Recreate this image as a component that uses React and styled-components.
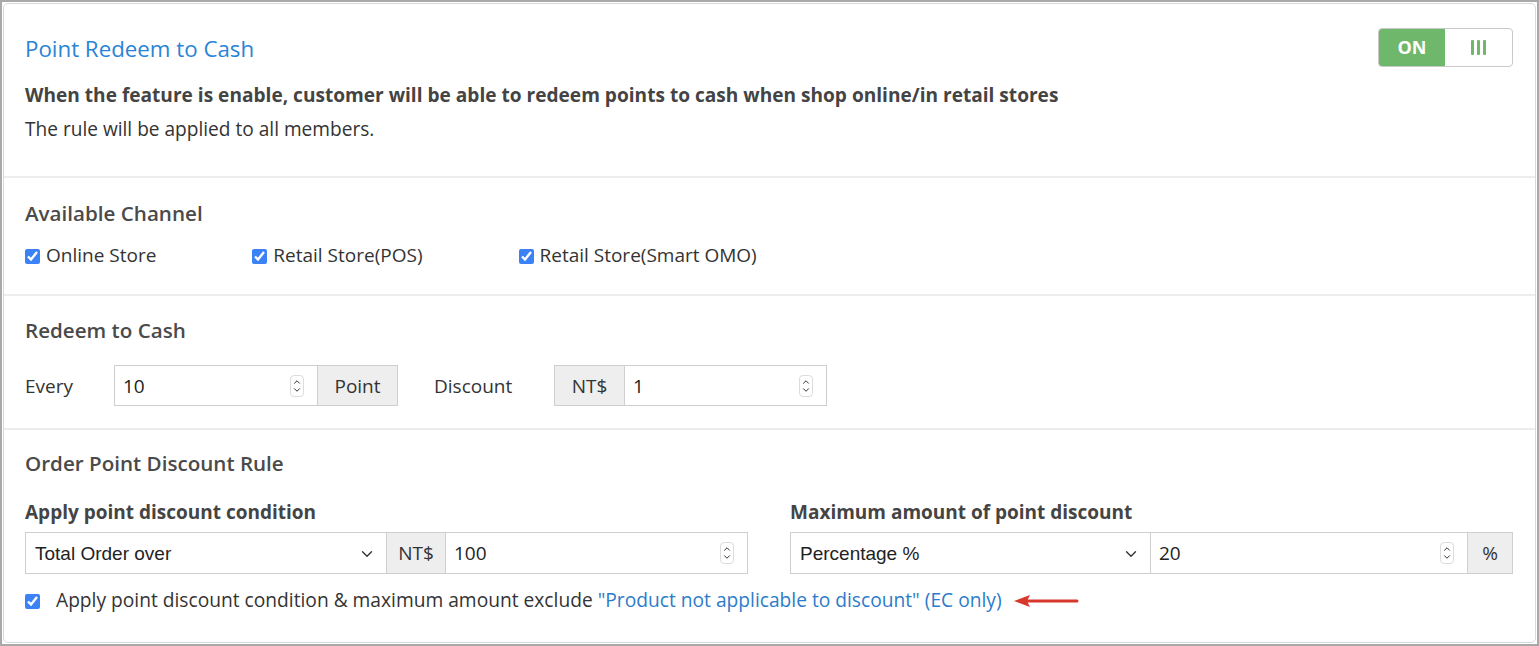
import React from "react";
import styled, { createGlobalStyle } from "styled-components";
import { ChevronDown, ChevronUp } from "lucide-react";

const GlobalStyle = createGlobalStyle`
  * { box-sizing: border-box; }
  html, body { margin: 0; padding: 0; background: #fff; }
  body {
    font-family: "Open Sans", "Liberation Sans", sans-serif;
    color: #333;
  }
`;

const Frame = styled.div`
  width: 1539px;
  height: 646px;
  border: 2px solid #a9a9a9;
  padding: 1px;
`;

const Card = styled.div`
  height: 100%;
  border: 1px solid #d9d9d9;
  border-radius: 5px;
  display: flex;
  flex-direction: column;
`;

const Section = styled.div`
  padding: ${(p) => p.$pad || "22px 22px 24px 21px"};
  border-top: ${(p) => (p.$first ? "none" : "2px solid #ededed")};
`;

const HeaderRow = styled.div`
  display: flex;
  justify-content: space-between;
  align-items: center;
  height: 38px;
`;

const Title = styled.h2`
  margin: 4px 0 0;
  font-size: 22.3px;
  font-weight: 400;
  color: #2a84d5;
  line-height: 28px;
`;

const Toggle = styled.div`
  display: flex;
  width: 135px;
  height: 39px;
  border: 1px solid #c9c9c9;
  border-radius: 4px;
  overflow: hidden;
`;

const ToggleOn = styled.div`
  width: 66px;
  background: #6fb76b;
  color: #fff;
  font-weight: 700;
  font-size: 18px;
  display: flex;
  align-items: center;
  justify-content: center;
`;

const ToggleGrip = styled.div`
  flex: 1;
  display: flex;
  align-items: center;
  justify-content: center;
  gap: 3px;
  span {
    width: 3px;
    height: 15px;
    background: #6fb76b;
    border-radius: 1px;
  }
`;

const Lead = styled.p`
  margin: ${(p) => p.$mt || "0"} 0 0;
  font-size: 19.1px;
  line-height: 24px;
  font-weight: ${(p) => (p.$bold ? 700 : 400)};
  color: ${(p) => (p.$bold ? "#444" : "#333")};
`;

const Heading = styled.h3`
  margin: 0;
  font-size: 20.6px;
  font-weight: 600;
  line-height: 26px;
  color: #4a4a4a;
`;

const ChannelRow = styled.div`
  display: flex;
  gap: 96px;
  margin-top: 17px;
`;

const CheckLabel = styled.label`
  display: flex;
  align-items: center;
  gap: ${(p) => p.$gap || "6px"};
  font-size: ${(p) => p.$size || 19}px;
  line-height: 24px;
  color: #333;
`;

const Check = styled.input.attrs({ type: "checkbox" })`
  width: 15px;
  height: 15px;
  margin: 2px 0 0;
  flex-shrink: 0;
  accent-color: #3a82f6;
`;

const RedeemRow = styled.div`
  display: flex;
  align-items: center;
  margin-top: 22px;
`;

const FieldLabel = styled.span`
  width: ${(p) => p.$w}px;
  margin-left: ${(p) => p.$ml || 0}px;
  font-size: 19px;
  color: #333;
`;

const Group = styled.div`
  display: flex;
  height: ${(p) => p.$h || 41}px;
  width: ${(p) => (p.$w ? `${p.$w}px` : "100%")};
`;

const Addon = styled.div`
  width: ${(p) => p.$w}px;
  flex-shrink: 0;
  display: flex;
  align-items: center;
  justify-content: center;
  background: #eee;
  border: 1px solid #cfcfcf;
  font-size: 19px;
  color: #333;
  margin-left: -1px;
  &:first-child { margin-left: 0; }
`;

const NumberBox = styled.div`
  flex: ${(p) => (p.$w ? "none" : 1)};
  width: ${(p) => (p.$w ? `${p.$w}px` : "auto")};
  min-width: 0;
  display: flex;
  align-items: center;
  border: 1px solid #cfcfcf;
  background: #fff;
  padding: 0 13px 0 8px;
  margin-left: -1px;
  &:first-child { margin-left: 0; }
`;

const NumberText = styled.input`
  flex: 1;
  min-width: 0;
  border: none;
  outline: none;
  padding: 0;
  font-family: "Open Sans", "Liberation Sans", sans-serif;
  font-size: 19px;
  color: #222;
  background: transparent;
`;

const Spinner = styled.span`
  width: 14px;
  height: 22px;
  border: 1px solid #dcdcdc;
  border-radius: 4px;
  display: flex;
  flex-direction: column;
  align-items: center;
  justify-content: center;
  color: #333;
  svg { display: block; margin: -1px 0; }
`;

const SelectBox = styled.div`
  width: ${(p) => p.$w}px;
  flex-shrink: 0;
  display: flex;
  align-items: center;
  justify-content: space-between;
  border: 1px solid #cfcfcf;
  background: #fff;
  padding: 2px 10px 0 9px;
  font-family: "Liberation Sans", Arial, sans-serif;
  font-size: 19px;
  color: #222;
`;

const RuleGrid = styled.div`
  display: grid;
  grid-template-columns: 1fr 1fr;
  column-gap: 42px;
  margin-top: 24px;
`;

const SubLabel = styled.div`
  font-size: 19px;
  font-weight: 700;
  line-height: 24px;
  color: #444;
  margin-bottom: 8px;
`;

const ExcludeRow = styled.div`
  display: flex;
  align-items: center;
  margin-top: 14px;
`;

const Link = styled.a`
  color: #2d7cc9;
  text-decoration: none;
  margin-left: 5px;
`;

const Arrow = styled.svg`
  margin-left: 11px;
  margin-top: 2px;
`;

const NumberInput = ({ value, w }) => (
  <NumberBox $w={w}>
    <NumberText defaultValue={value} />
    <Spinner>
      <ChevronUp size={10} strokeWidth={2.4} />
      <ChevronDown size={10} strokeWidth={2.4} />
    </Spinner>
  </NumberBox>
);

const Select = ({ label, w }) => (
  <SelectBox $w={w}>
    <span>{label}</span>
    <ChevronDown size={18} strokeWidth={1.8} color="#333" />
  </SelectBox>
);

const App = () => {
  return (
    <Frame>
      <GlobalStyle />
      <Card>
        <Section $first $pad="24px 22px 35px 21px">
          <HeaderRow>
            <Title>Point Redeem to Cash</Title>
            <Toggle>
              <ToggleOn>ON</ToggleOn>
              <ToggleGrip>
                <span />
                <span />
                <span />
              </ToggleGrip>
            </Toggle>
          </HeaderRow>
          <Lead $bold $mt="17px">
            When the feature is enable, customer will be able to redeem points to cash when shop online/in retail stores
          </Lead>
          <Lead $mt="10px">The rule will be applied to all members.</Lead>
        </Section>

        <Section $pad="22px 22px 27px 21px">
          <Heading>Available Channel</Heading>
          <ChannelRow>
            <CheckLabel>
              <Check defaultChecked />
              Online Store
            </CheckLabel>
            <CheckLabel>
              <Check defaultChecked />
              Retail Store(POS)
            </CheckLabel>
            <CheckLabel>
              <Check defaultChecked />
              Retail Store(Smart OMO)
            </CheckLabel>
          </ChannelRow>
        </Section>

        <Section $pad="21px 22px 22px 21px">
          <Heading>Redeem to Cash</Heading>
          <RedeemRow>
            <FieldLabel $w={89}>Every</FieldLabel>
            <Group $w={284}>
              <NumberInput value="10" w={204} />
              <Addon $w={81}>Point</Addon>
            </Group>
            <FieldLabel $w={120} $ml={36}>Discount</FieldLabel>
            <Group $w={273}>
              <Addon $w={71}>NT$</Addon>
              <NumberInput value="1" />
            </Group>
          </RedeemRow>
        </Section>

        <Section $pad="20px 22px 24px 21px">
          <Heading>Order Point Discount Rule</Heading>
          <RuleGrid>
            <div>
              <SubLabel>Apply point discount condition</SubLabel>
              <Group $h={42}>
                <Select label="Total Order over" w={362} />
                <Addon $w={60}>NT$</Addon>
                <NumberInput value="100" />
              </Group>
            </div>
            <div>
              <SubLabel>Maximum amount of point discount</SubLabel>
              <Group $h={42}>
                <Select label="Percentage %" w={361} />
                <NumberInput value="20" />
                <Addon $w={46}>%</Addon>
              </Group>
            </div>
          </RuleGrid>
          <ExcludeRow>
            <CheckLabel $gap="16px" $size={19.2}>
              <Check defaultChecked />
              <span>
                Apply point discount condition &amp; maximum amount exclude
                <Link>"Product not applicable to discount" (EC only)</Link>
              </span>
            </CheckLabel>
            <Arrow width="66" height="14" viewBox="0 0 66 14">
              <path d="M14 7 H64" stroke="#d8382c" strokeWidth="3" strokeLinecap="round" />
              <path d="M1 7 L17 1 L14 7 L17 13 Z" fill="#d8382c" />
            </Arrow>
          </ExcludeRow>
        </Section>
      </Card>
    </Frame>
  );
};

export default App;
